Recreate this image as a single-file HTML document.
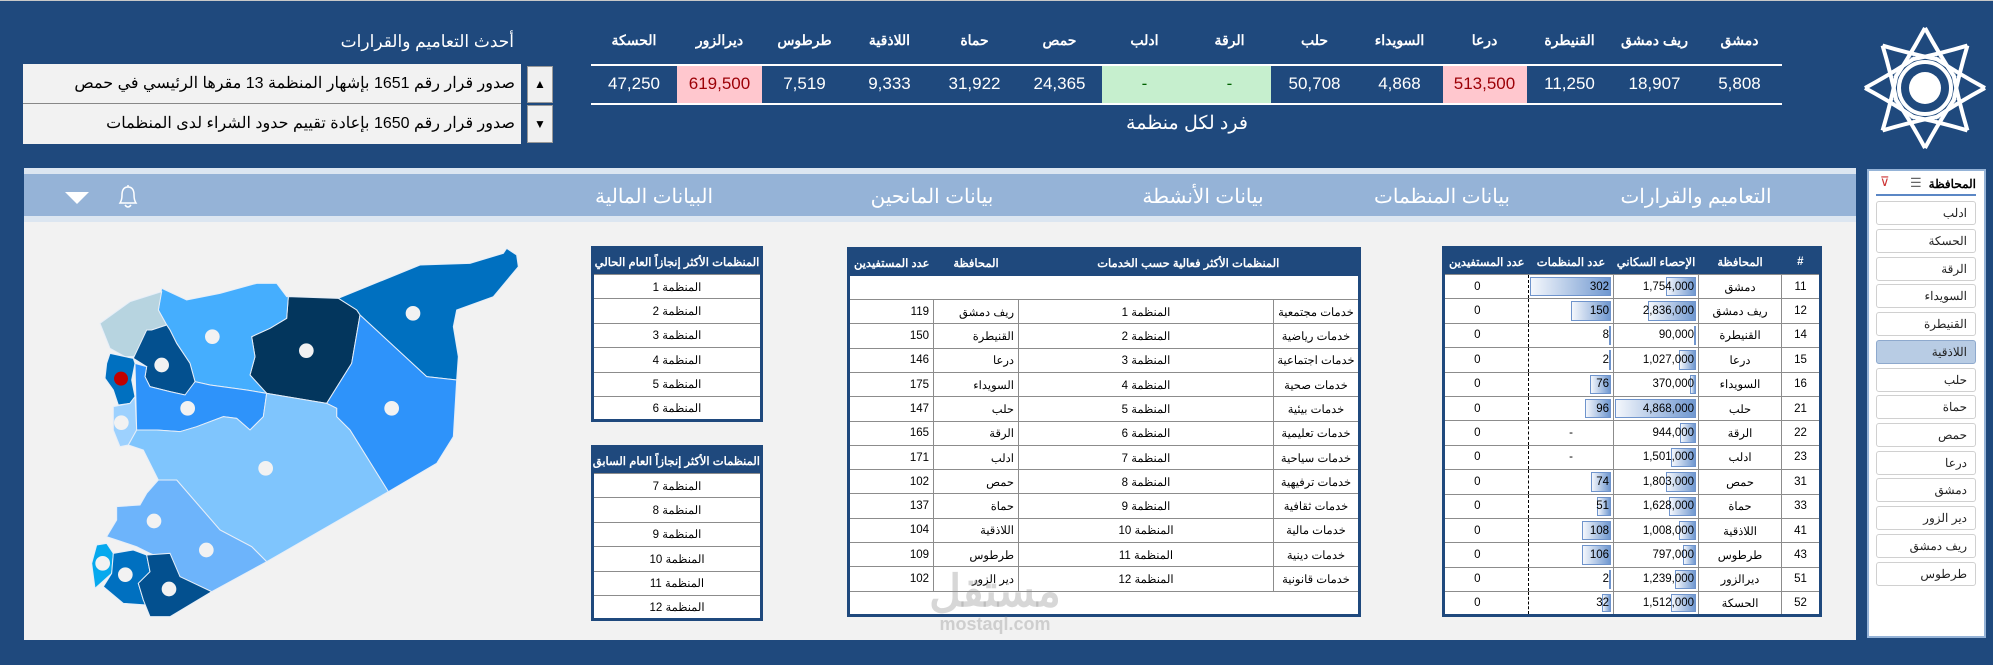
<!DOCTYPE html>
<html><head><meta charset="utf-8"><style>
*{margin:0;padding:0;box-sizing:border-box}
body{width:1993px;height:665px;background:#1f497d;position:relative;overflow:hidden;font-family:"Liberation Sans","Noto Sans CJK SC",sans-serif}
.a{position:absolute}
.hd{color:#fff;font-weight:bold;font-size:14px;text-align:center}
.tv{color:#fff;font-size:17px;text-align:center}
table{border-collapse:collapse;table-layout:fixed;position:absolute;background:#fff;border:3px solid #1f497d}
td{font-size:11.5px;color:#000;overflow:hidden;white-space:nowrap}
th{background:#1f497d;color:#fff;font-size:11.5px;font-weight:bold;height:27px;white-space:nowrap}
.rt tr td{border-top:1px solid #8c8c8c;height:24.4px;position:relative}
.bar{position:absolute;top:2px;bottom:2px;right:2px;border:1px solid #6f94cc;background:linear-gradient(to right,#f4f7fc,#7098d0)}
.num{position:relative;text-align:right;padding-right:4px;z-index:1}
.sl{position:absolute;left:1876px;width:100px;height:24px;border:1px solid #d0d0d0;border-radius:3px;background:#fff;font-size:12px;text-align:right;padding-right:8px;line-height:22px;color:#222}
.ph{position:absolute;top:184px;color:#fff;font-size:20px;text-align:center;width:200px}
</style></head><body>
<div class="a" style="left:0;top:0;width:1993px;height:1px;background:#c8c8c8"></div>

<!-- logo -->
<svg class="a" style="left:1860px;top:25px" width="130" height="130" viewBox="-65 -63 130 130">
<g fill="none" stroke="#fff" stroke-width="4">
<g transform="rotate(0)"><path d="M0,-60 Q14,-34 30,-10"/><path d="M0,-60 Q-14,-34 -30,-10"/></g>
<g transform="rotate(45)"><path d="M0,-60 Q14,-34 30,-10"/><path d="M0,-60 Q-14,-34 -30,-10"/></g>
<g transform="rotate(90)"><path d="M0,-60 Q14,-34 30,-10"/><path d="M0,-60 Q-14,-34 -30,-10"/></g>
<g transform="rotate(135)"><path d="M0,-60 Q14,-34 30,-10"/><path d="M0,-60 Q-14,-34 -30,-10"/></g>
<g transform="rotate(180)"><path d="M0,-60 Q14,-34 30,-10"/><path d="M0,-60 Q-14,-34 -30,-10"/></g>
<g transform="rotate(225)"><path d="M0,-60 Q14,-34 30,-10"/><path d="M0,-60 Q-14,-34 -30,-10"/></g>
<g transform="rotate(270)"><path d="M0,-60 Q14,-34 30,-10"/><path d="M0,-60 Q-14,-34 -30,-10"/></g>
<g transform="rotate(315)"><path d="M0,-60 Q14,-34 30,-10"/><path d="M0,-60 Q-14,-34 -30,-10"/></g>
<circle r="26"/></g><circle r="16" fill="#fff"/></svg>

<!-- top table -->
<div class="a" style="left:591px;top:64px;width:1191px;height:2px;background:#fff"></div>
<div class="a" style="left:591px;top:103px;width:1191px;height:2px;background:#fff"></div>
<div class="a" style="left:677px;top:66px;width:85px;height:37px;background:#ffc7ce"></div>
<div class="a" style="left:1102px;top:66px;width:169px;height:37px;background:#c6efce"></div>
<div class="a" style="left:1443px;top:66px;width:84px;height:37px;background:#ffc7ce"></div>
<div class="a" style="left:591px;top:32px;width:1191px;display:flex;direction:rtl">
<div class="hd" style="width:85px">دمشق</div><div class="hd" style="width:85px">ريف دمشق</div><div class="hd" style="width:85px">القنيطرة</div><div class="hd" style="width:85px">درعا</div><div class="hd" style="width:85px">السويداء</div><div class="hd" style="width:85px">حلب</div><div class="hd" style="width:85px">الرقة</div><div class="hd" style="width:85px">ادلب</div><div class="hd" style="width:85px">حمص</div><div class="hd" style="width:85px">حماة</div><div class="hd" style="width:85px">اللاذقية</div><div class="hd" style="width:85px">طرطوس</div><div class="hd" style="width:85px">ديرالزور</div><div class="hd" style="width:86px">الحسكة</div></div>
<div class="a" style="left:591px;top:74px;width:1191px;display:flex;direction:rtl">
<div class="tv" style="width:85px">5,808</div><div class="tv" style="width:85px">18,907</div><div class="tv" style="width:85px">11,250</div><div class="tv" style="width:85px;color:#9c0006">513,500</div><div class="tv" style="width:85px">4,868</div><div class="tv" style="width:85px">50,708</div><div class="tv" style="width:85px;color:#006100">-</div><div class="tv" style="width:85px;color:#006100">-</div><div class="tv" style="width:85px">24,365</div><div class="tv" style="width:85px">31,922</div><div class="tv" style="width:85px">9,333</div><div class="tv" style="width:85px">7,519</div><div class="tv" style="width:85px;color:#9c0006">619,500</div><div class="tv" style="width:86px">47,250</div></div>
<div class="a" style="left:1087px;top:112px;width:200px;text-align:center;color:#fff;font-size:19px">فرد لكل منظمة</div>

<!-- decrees -->
<div class="a" style="left:300px;top:32px;width:214px;text-align:right;color:#fff;font-size:17px">أحدث التعاميم والقرارات</div>
<div class="a" style="left:23px;top:64px;width:498px;height:40px;background:#f2f2f2;border-bottom:1px solid #888;font-size:16px;text-align:right;padding-right:6px;line-height:40px;direction:rtl">صدور قرار رقم 1651 بإشهار المنظمة 13 مقرها الرئيسي في حمص</div>
<div class="a" style="left:23px;top:104px;width:498px;height:40px;background:#f2f2f2;font-size:16px;text-align:right;padding-right:6px;line-height:40px;direction:rtl">صدور قرار رقم 1650 بإعادة تقييم حدود الشراء لدى المنظمات</div>
<div class="a" style="left:527px;top:66px;width:26px;height:37px;background:#f0f0f0;border:1px solid #999;font-size:12px;text-align:center;line-height:35px">▲</div>
<div class="a" style="left:527px;top:105px;width:26px;height:38px;background:#f0f0f0;border:1px solid #999;font-size:12px;text-align:center;line-height:36px">▼</div>

<!-- main panel -->
<div class="a" style="left:24px;top:168px;width:1832px;height:472px;background:#f2f2f2"></div>
<div class="a" style="left:24px;top:168px;width:1832px;height:54px;background:#dce6f1"></div>
<div class="a" style="left:24px;top:174px;width:1832px;height:42px;background:#95b3d7"></div>
<div class="ph" style="left:1596px">التعاميم والقرارات</div>
<div class="ph" style="left:1342px">بيانات المنظمات</div>
<div class="ph" style="left:1103px">بيانات الأنشطة</div>
<div class="ph" style="left:832px">بيانات المانحين</div>
<div class="ph" style="left:554px">البيانات المالية</div>
<svg class="a" style="left:65px;top:192px" width="25" height="12"><path d="M0,0 L24,0 L12,12Z" fill="#fff"/></svg>
<svg class="a" style="left:116px;top:184px" width="24" height="26"><path d="M4,19 Q6,16 6,11 Q6,3 12,3 Q18,3 18,11 Q18,16 20,19 Z M12,1 v2 M9,21 Q12,25 15,21" fill="none" stroke="#fff" stroke-width="1.5"/></svg>

<!-- map -->
<svg class="a" style="left:70px;top:230px" width="460" height="400" viewBox="0 0 1380 1200">
<g stroke="#e6eef8" stroke-width="3">
<path fill="#0070c0" d="M805,205 L1050,105 L1200,100 L1300,70 L1310,55 L1340,75 L1345,110 L1270,200 L1160,240 L1150,290 L1165,380 L1160,450 L1070,440 L870,255 L860,240Z"/>
<path fill="#03365d" d="M655,200 L805,205 L860,240 L870,255 L845,400 L770,520 L590,490 L540,435 L555,380 L545,320 L600,295 L650,265Z"/>
<path fill="#2e93fa" d="M870,255 L1070,440 L1160,450 L1150,620 L1100,700 L955,785 L840,600 L800,560 L800,535 L770,520 L845,400Z"/>
<path fill="#45aefe" d="M275,175 L350,210 L450,190 L560,160 L620,160 L650,200 L655,200 L650,265 L600,295 L545,320 L555,380 L540,435 L590,490 L530,480 L420,465 L375,455 L360,400 L320,340 L300,300 L290,285 L265,240Z"/>
<path fill="#b7d4e0" d="M90,280 L180,215 L275,185 L265,240 L290,285 L245,300 L230,345 L190,380 L165,380 L120,355Z"/>
<path fill="#03508f" d="M230,300 L245,300 L290,285 L300,300 L320,340 L360,400 L375,455 L365,485 L345,495 L300,485 L240,470 L225,440 L230,410 L190,385Z"/>
<path fill="#0070c0" d="M120,370 L165,380 L190,385 L195,400 L185,450 L195,500 L180,520 L145,525 L130,480 L105,445 L110,400Z"/>
<path fill="#9dd1fe" d="M130,530 L180,520 L195,500 L200,600 L175,645 L150,650 L130,600Z"/>
<path fill="#2e93fa" d="M195,400 L230,410 L225,440 L240,470 L300,485 L345,495 L375,455 L420,465 L530,480 L590,490 L580,560 L540,600 L500,565 L460,560 L380,590 L330,605 L260,600 L200,600Z"/>
<path fill="#7fc5fd" d="M175,645 L200,600 L260,600 L330,605 L380,590 L460,560 L500,565 L540,600 L580,560 L590,490 L770,520 L800,535 L800,560 L840,600 L955,785 L590,995 L545,950 L450,900 L320,750 L265,750 L240,700 L220,660Z"/>
<path fill="#6db4fb" d="M265,750 L320,750 L450,900 L545,950 L590,995 L425,1085 L330,1040 L290,990 L240,970 L200,950 L140,930 L110,920 L140,870 L140,830 L210,825 L230,790Z"/>
<path fill="#06a9ee" d="M80,945 L110,940 L130,970 L125,1030 L75,1075 L65,1000Z"/>
<path fill="#0070c0" d="M130,970 L190,960 L230,975 L240,1025 L205,1060 L220,1110 L230,1125 L160,1120 L100,1070 L125,1030Z"/>
<path fill="#03508f" d="M230,975 L300,970 L330,1040 L425,1085 L300,1160 L240,1160 L220,1110 L205,1060 L240,1025Z"/>
</g>
<g fill="#f2f2f2">
<circle cx="427" cy="320" r="22"/><circle cx="709" cy="362" r="22"/><circle cx="1029" cy="250" r="22"/><circle cx="275" cy="405" r="22"/><circle cx="965" cy="535" r="22"/><circle cx="353" cy="535" r="22"/><circle cx="154" cy="578" r="22"/><circle cx="587" cy="715" r="22"/><circle cx="252" cy="873" r="22"/><circle cx="409" cy="960" r="22"/><circle cx="98" cy="1000" r="22"/><circle cx="166" cy="1034" r="22"/><circle cx="297" cy="1077" r="22"/></g>
<circle cx="153" cy="446" r="21" fill="#c00000"/>
</svg>

<!-- small tables -->
<table style="left:591px;top:246px;width:172px;direction:rtl" class="rt">
<tr><th>المنظمات الأكثر إنجازاً العام الحالي</th></tr>
<tr><td style="text-align:center">المنظمة 1</td></tr><tr><td style="text-align:center">المنظمة 2</td></tr><tr><td style="text-align:center">المنظمة 3</td></tr><tr><td style="text-align:center">المنظمة 4</td></tr><tr><td style="text-align:center">المنظمة 5</td></tr><tr><td style="text-align:center">المنظمة 6</td></tr></table>
<table style="left:591px;top:445px;width:172px;direction:rtl" class="rt">
<tr><th>المنظمات الأكثر إنجازاً العام السابق</th></tr>
<tr><td style="text-align:center">المنظمة 7</td></tr><tr><td style="text-align:center">المنظمة 8</td></tr><tr><td style="text-align:center">المنظمة 9</td></tr><tr><td style="text-align:center">المنظمة 10</td></tr><tr><td style="text-align:center">المنظمة 11</td></tr><tr><td style="text-align:center">المنظمة 12</td></tr></table>

<!-- middle table -->
<table style="left:847px;top:247px;width:511px;height:370px;direction:rtl">
<colgroup><col style="width:86px"><col style="width:255px"><col style="width:85px"><col style="width:85px"></colgroup>
<tr><th colspan="2" style="text-align:center">المنظمات الأكثر فعالية حسب الخدمات</th><th>المحافظة</th><th>عدد المستفيدين</th></tr>
<tr><td colspan="4" style="height:24px"></td></tr>
<tbody class="mt">
<tr><td>خدمات مجتمعية</td><td>المنظمة 1</td><td>ريف دمشق</td><td>119</td></tr>
<tr><td>خدمات رياضية</td><td>المنظمة 2</td><td>القنيطرة</td><td>150</td></tr>
<tr><td>خدمات اجتماعية</td><td>المنظمة 3</td><td>درعا</td><td>146</td></tr>
<tr><td>خدمات صحية</td><td>المنظمة 4</td><td>السويداء</td><td>175</td></tr>
<tr><td>خدمات بيئية</td><td>المنظمة 5</td><td>حلب</td><td>147</td></tr>
<tr><td>خدمات تعليمية</td><td>المنظمة 6</td><td>الرقة</td><td>165</td></tr>
<tr><td>خدمات سياحية</td><td>المنظمة 7</td><td>ادلب</td><td>171</td></tr>
<tr><td>خدمات ترفيهية</td><td>المنظمة 8</td><td>حمص</td><td>102</td></tr>
<tr><td>خدمات ثقافية</td><td>المنظمة 9</td><td>حماة</td><td>137</td></tr>
<tr><td>خدمات مالية</td><td>المنظمة 10</td><td>اللاذقية</td><td>104</td></tr>
<tr><td>خدمات دينية</td><td>المنظمة 11</td><td>طرطوس</td><td>109</td></tr>
<tr><td>خدمات قانونية</td><td>المنظمة 12</td><td>دير الزور</td><td>102</td></tr>
<tr><td colspan="4"></td></tr>
</tbody></table>
<style>
.mt td{border-top:1px solid #8c8c8c;height:24.2px;border-left:1px solid #8c8c8c}
.mt td:nth-child(1){text-align:center}
.mt td:nth-child(2){text-align:center}
.mt td:nth-child(3){text-align:right;padding-right:4px}
.mt td:nth-child(4){text-align:right;padding-right:4px;border-left:none}
.mt tr:last-child td{border:none;border-top:1px solid #8c8c8c}
.r td:nth-child(1){text-align:center}
.r td:nth-child(2){text-align:center;border-right:1px solid #8c8c8c}
.r td:nth-child(3),.r td:nth-child(4){border-right:1px solid #8c8c8c}
.r td:nth-child(5){border-right:1px dashed #000}
.r td:nth-child(6){text-align:right;padding-right:4px}
</style>

<!-- right table -->
<table style="left:1442px;top:246px;width:377px;direction:rtl" class="rt r">
<colgroup><col style="width:39px"><col style="width:83px"><col style="width:85px"><col style="width:85px"><col style="width:44px"><col style="width:41px"></colgroup>
<tr><th>#</th><th>المحافظة</th><th>الإحصاء السكاني</th><th>عدد المنظمات</th><th colspan="2">عدد المستفيدين</th></tr>
<tr><td>11</td><td>دمشق</td><td><div class="bar" style="width:30px"></div><div class="num">1,754,000</div></td><td><div class="bar" style="width:81px"></div><div class="num">302</div></td><td></td><td>0</td></tr>
<tr><td>12</td><td>ريف دمشق</td><td><div class="bar" style="width:48px"></div><div class="num">2,836,000</div></td><td><div class="bar" style="width:40px"></div><div class="num">150</div></td><td></td><td>0</td></tr>
<tr><td>14</td><td>القنيطرة</td><td><div class="bar" style="width:2px"></div><div class="num">90,000</div></td><td><div class="bar" style="width:2px"></div><div class="num">8</div></td><td></td><td>0</td></tr>
<tr><td>15</td><td>درعا</td><td><div class="bar" style="width:17px"></div><div class="num">1,027,000</div></td><td><div class="bar" style="width:1px"></div><div class="num">2</div></td><td></td><td>0</td></tr>
<tr><td>16</td><td>السويداء</td><td><div class="bar" style="width:6px"></div><div class="num">370,000</div></td><td><div class="bar" style="width:21px"></div><div class="num">76</div></td><td></td><td>0</td></tr>
<tr><td>21</td><td>حلب</td><td><div class="bar" style="width:81px"></div><div class="num">4,868,000</div></td><td><div class="bar" style="width:26px"></div><div class="num">96</div></td><td></td><td>0</td></tr>
<tr><td>22</td><td>الرقة</td><td><div class="bar" style="width:16px"></div><div class="num">944,000</div></td><td style="text-align:center">-</td><td></td><td>0</td></tr>
<tr><td>23</td><td>ادلب</td><td><div class="bar" style="width:25px"></div><div class="num">1,501,000</div></td><td style="text-align:center">-</td><td></td><td>0</td></tr>
<tr><td>31</td><td>حمص</td><td><div class="bar" style="width:30px"></div><div class="num">1,803,000</div></td><td><div class="bar" style="width:20px"></div><div class="num">74</div></td><td></td><td>0</td></tr>
<tr><td>33</td><td>حماة</td><td><div class="bar" style="width:27px"></div><div class="num">1,628,000</div></td><td><div class="bar" style="width:14px"></div><div class="num">51</div></td><td></td><td>0</td></tr>
<tr><td>41</td><td>اللاذقية</td><td><div class="bar" style="width:17px"></div><div class="num">1,008,000</div></td><td><div class="bar" style="width:29px"></div><div class="num">108</div></td><td></td><td>0</td></tr>
<tr><td>43</td><td>طرطوس</td><td><div class="bar" style="width:13px"></div><div class="num">797,000</div></td><td><div class="bar" style="width:29px"></div><div class="num">106</div></td><td></td><td>0</td></tr>
<tr><td>51</td><td>ديرالزور</td><td><div class="bar" style="width:21px"></div><div class="num">1,239,000</div></td><td><div class="bar" style="width:1px"></div><div class="num">2</div></td><td></td><td>0</td></tr>
<tr><td>52</td><td>الحسكة</td><td><div class="bar" style="width:25px"></div><div class="num">1,512,000</div></td><td><div class="bar" style="width:9px"></div><div class="num">32</div></td><td></td><td>0</td></tr>
</table>

<!-- watermark -->
<div class="a" style="left:905px;top:568px;width:180px;text-align:center;color:rgba(140,140,140,0.35);font-size:44px;font-weight:bold;line-height:48px">مستقل</div>
<div class="a" style="left:905px;top:614px;width:180px;text-align:center;color:rgba(140,140,140,0.35);font-size:18px;font-weight:bold">mostaql.com</div>

<!-- slicer -->
<div class="a" style="left:1867px;top:169px;width:119px;height:469px;background:#fff;border:2px solid #95b3d7"></div>
<div class="a" style="left:1876px;top:174px;width:100px;height:22px;border-bottom:2px solid #5b87c5;font-size:12px;font-weight:bold;text-align:right;line-height:20px">المحافظة</div>
<div class="a" style="left:1910px;top:175px;font-size:13px;color:#666">☰</div>
<div class="a" style="left:1880px;top:174px;font-size:13px;color:#c33">⊽</div>
<div class="sl" style="top:201px">ادلب</div>
<div class="sl" style="top:229px">الحسكة</div>
<div class="sl" style="top:257px">الرقة</div>
<div class="sl" style="top:284px">السويداء</div>
<div class="sl" style="top:312px">القنيطرة</div>
<div class="sl" style="top:340px;background:#b8cce4;border-color:#8ea9cd">اللاذقية</div>
<div class="sl" style="top:368px">حلب</div>
<div class="sl" style="top:395px">حماة</div>
<div class="sl" style="top:423px">حمص</div>
<div class="sl" style="top:451px">درعا</div>
<div class="sl" style="top:478px">دمشق</div>
<div class="sl" style="top:506px">دير الزور</div>
<div class="sl" style="top:534px">ريف دمشق</div>
<div class="sl" style="top:562px">طرطوس</div>
</body></html>
